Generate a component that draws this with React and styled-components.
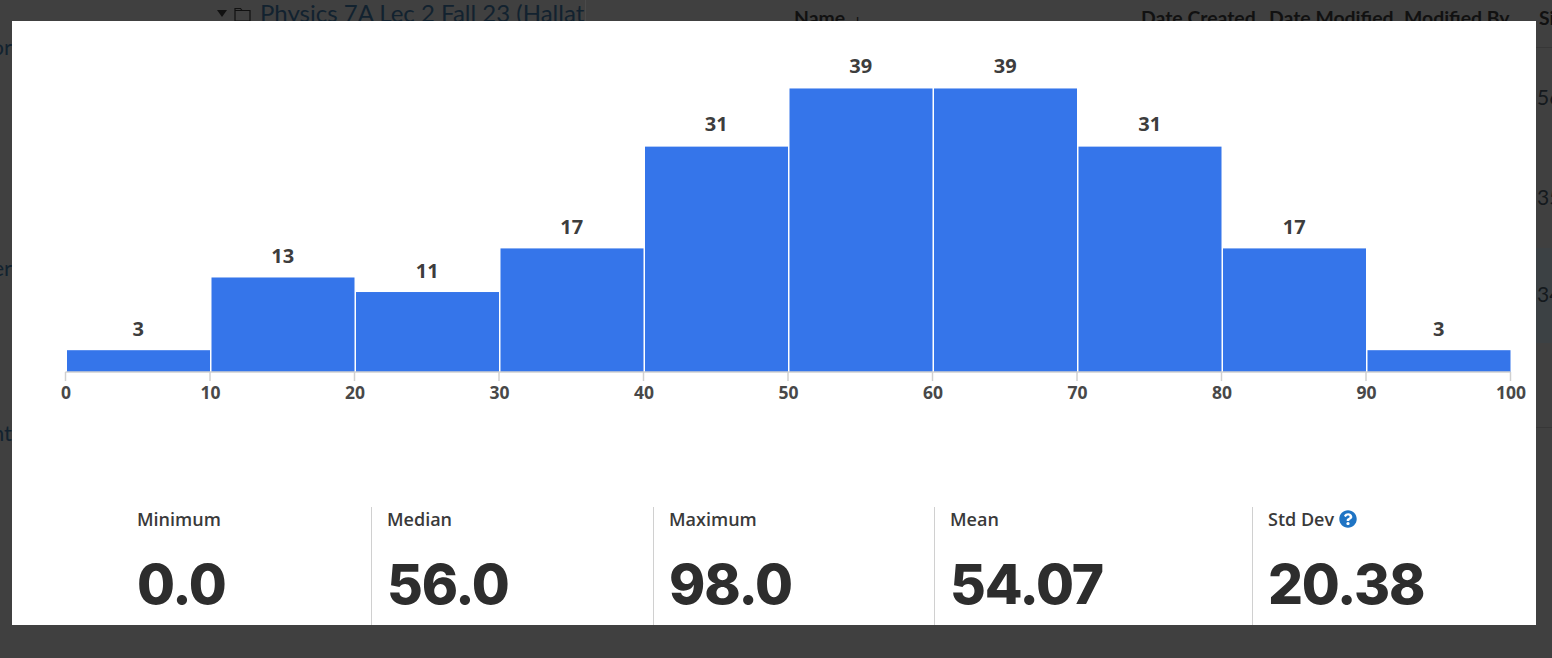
import React from "react";
import styled, { createGlobalStyle } from "styled-components";
import { FaQuestionCircle } from "react-icons/fa";

const BINS = [3, 13, 11, 17, 31, 39, 39, 31, 17, 3];
const TICKS = [0, 10, 20, 30, 40, 50, 60, 70, 80, 90, 100];
const STATS = [
  { label: "Minimum", value: "0.0", width: 234 },
  { label: "Median", value: "56.0", width: 282 },
  { label: "Maximum", value: "98.0", width: 281 },
  { label: "Mean", value: "54.07", width: 318 },
  { label: "Std Dev", value: "20.38", width: 284, help: true },
];

const CHART_LEFT = 53.5;
const BIN_WIDTH = 144.5;
const BASELINE = 351;
const UNIT = 7.27;

const GlobalStyle = createGlobalStyle`
  html, body {
    margin: 0;
    height: 100%;
    overflow: hidden;
    background: #404040;
    font-family: "Lato", "Liberation Sans", sans-serif;
  }
`;

const Page = styled.div`
  display: flex;
  width: 1552px;
  height: 658px;
  overflow: hidden;
  color: #14202b;
`;

const SideNav = styled.nav`
  width: 12px;
  flex: none;
  display: flex;
  flex-direction: column;
  align-items: flex-end;
  padding-top: 33px;
  font-size: 22px;
  line-height: 28px;
  color: #12222f;
  overflow: hidden;
`;

const NavItem = styled.div`
  margin-bottom: ${({ gap }) => gap}px;
  white-space: nowrap;
`;

const TreePane = styled.div`
  width: 574px;
  flex: none;
  box-sizing: border-box;
  padding-left: 205px;
  overflow: hidden;
`;

const TreeRow = styled.div`
  display: flex;
  align-items: center;
  height: 26px;
  gap: 7px;
  white-space: nowrap;
  font-size: 24px;
  color: #12222f;
  overflow: hidden;
  border-right: 1px solid #4a4a4a;
`;

const Caret = styled.span`
  width: 0;
  height: 0;
  flex: none;
  border-left: 5px solid transparent;
  border-right: 5px solid transparent;
  border-top: 7px solid #111;
`;

const FolderSvg = styled.svg`
  flex: none;
  margin-top: 2px;
`;

const TreeLabel = styled.span`
  margin-left: 2px;
  margin-top: -2px;
`;

const Table = styled.div`
  flex: 1;
  min-width: 0;
  box-sizing: border-box;
  padding-top: 6px;
`;

const TableHead = styled.div`
  display: grid;
  grid-template-columns: 555px 128px 135px 135px 1fr;
  height: 41px;
  border-bottom: 1px solid #373737;
  font-size: 19.4px;
  font-weight: 700;
  line-height: 24px;
  color: #111;
  white-space: nowrap;
`;

const HeadCell = styled.div`
  padding-left: ${({ first }) => (first ? "208px" : "0")};
`;

const SortArrow = styled.span`
  margin-left: 8px;
  font-size: 11px;
`;

const Row = styled.div`
  display: grid;
  grid-template-columns: 951px 1fr;
  align-items: center;
  height: ${({ height }) => height}px;
  box-sizing: border-box;
  padding-bottom: 4px;
  background: ${({ active }) => (active ? "#3c4144" : "transparent")};
  border-bottom: ${({ line }) => (line ? "1px solid #373737" : "none")};
  font-size: 21px;
  color: #14191d;
`;

const SizeCell = styled.div`
  grid-column: 2;
  white-space: nowrap;
`;

const Modal = styled.div`
  position: fixed;
  left: 12px;
  top: 21px;
  width: 1524px;
  height: 604px;
  display: flex;
  flex-direction: column;
  background: #fff;
  overflow: hidden;
`;

const Chart = styled.svg`
  display: block;
  flex: none;
`;

const Bar = styled.rect`
  fill: #3575ea;
`;

const AxisLine = styled.line`
  stroke: #d0d0d0;
  stroke-width: 1.5;
`;

const BarValue = styled.text`
  font-family: "Open Sans", "Liberation Sans", sans-serif;
  font-size: 20px;
  font-weight: 700;
  fill: #3d3d3d;
  text-anchor: middle;
`;

const TickLabel = styled.text`
  font-family: "Open Sans", "Liberation Sans", sans-serif;
  font-size: 17.5px;
  font-weight: 700;
  fill: #484848;
  text-anchor: middle;
`;

const Stats = styled.div`
  display: flex;
  flex: 1;
  padding-left: 125px;
`;

const Stat = styled.div`
  width: ${({ width }) => width}px;
  flex: none;
  box-sizing: border-box;
  padding-left: ${({ first }) => (first ? "0" : "15px")};
  border-left: ${({ first }) => (first ? "none" : "1px solid #d0d0d0")};
`;

const StatLabel = styled.div`
  display: flex;
  align-items: center;
  gap: 5px;
  height: 24px;
  font-family: "Open Sans", "Liberation Sans", sans-serif;
  font-size: 18px;
  font-weight: 600;
  color: #3a3a3a;
`;

const HelpIcon = styled(FaQuestionCircle)`
  width: 18px;
  height: 18px;
  color: #1f74c4;
`;

const StatValue = styled.div`
  margin-top: 17px;
  font-family: "Inter", "Liberation Sans", sans-serif;
  font-size: 55px;
  font-weight: 800;
  line-height: 72px;
  letter-spacing: -1.2px;
  color: #2d2d2d;
`;

const FolderIcon = () => (
  <FolderSvg width="17" height="16" viewBox="0 0 17 16" fill="none" stroke="#111" strokeWidth="1.2">
    <path d="M1 15V2.5h5.5l1.5 2H16V15H1zM1 4.5h7" />
  </FolderSvg>
);

const Histogram = () => (
  <Chart width="1524" height="486">
    {BINS.map((count, i) => {
      const x = CHART_LEFT + i * BIN_WIDTH;
      const h = count * UNIT;
      return (
        <g key={i}>
          <Bar x={x + 1.5} y={BASELINE - h} width={BIN_WIDTH - 1.5} height={h} />
          <BarValue x={x + BIN_WIDTH / 2 + 0.5} y={BASELINE - h - 14 - count * 0.04}>
            {count}
          </BarValue>
        </g>
      );
    })}
    <AxisLine x1={CHART_LEFT} x2={CHART_LEFT + 10 * BIN_WIDTH} y1={BASELINE} y2={BASELINE} />
    {TICKS.map((tick, i) => {
      const x = CHART_LEFT + i * BIN_WIDTH;
      return (
        <g key={tick}>
          <AxisLine x1={x} x2={x} y1={BASELINE} y2={BASELINE + 9} />
          <TickLabel x={x + 0.5} y={378}>
            {tick}
          </TickLabel>
        </g>
      );
    })}
  </Chart>
);

const App = () => {
  return (
    <>
      <GlobalStyle />
      <Page>
        <SideNav>
          <NavItem gap={193}>or</NavItem>
          <NavItem gap={137}>er</NavItem>
          <NavItem gap={0}>nt</NavItem>
        </SideNav>
        <TreePane>
          <TreeRow>
            <Caret />
            <FolderIcon />
            <TreeLabel>Physics 7A Lec 2 Fall 23 (Hallatschek)</TreeLabel>
          </TreeRow>
        </TreePane>
        <Table>
          <TableHead>
            <HeadCell first>
              Name<SortArrow>↓</SortArrow>
            </HeadCell>
            <HeadCell>Date Created</HeadCell>
            <HeadCell>Date Modified</HeadCell>
            <HeadCell>Modified By</HeadCell>
            <HeadCell>Size</HeadCell>
          </TableHead>
          <Row height={100}>
            <SizeCell>56</SizeCell>
          </Row>
          <Row height={100}>
            <SizeCell>35</SizeCell>
          </Row>
          <Row height={95} active>
            <SizeCell>34</SizeCell>
          </Row>
          <Row height={85} line />
        </Table>
      </Page>
      <Modal>
        <Histogram />
        <Stats>
          {STATS.map((stat, i) => (
            <Stat key={stat.label} width={stat.width} first={i === 0}>
              <StatLabel>
                {stat.label}
                {stat.help && <HelpIcon />}
              </StatLabel>
              <StatValue>{stat.value}</StatValue>
            </Stat>
          ))}
        </Stats>
      </Modal>
    </>
  );
};

export default App;
